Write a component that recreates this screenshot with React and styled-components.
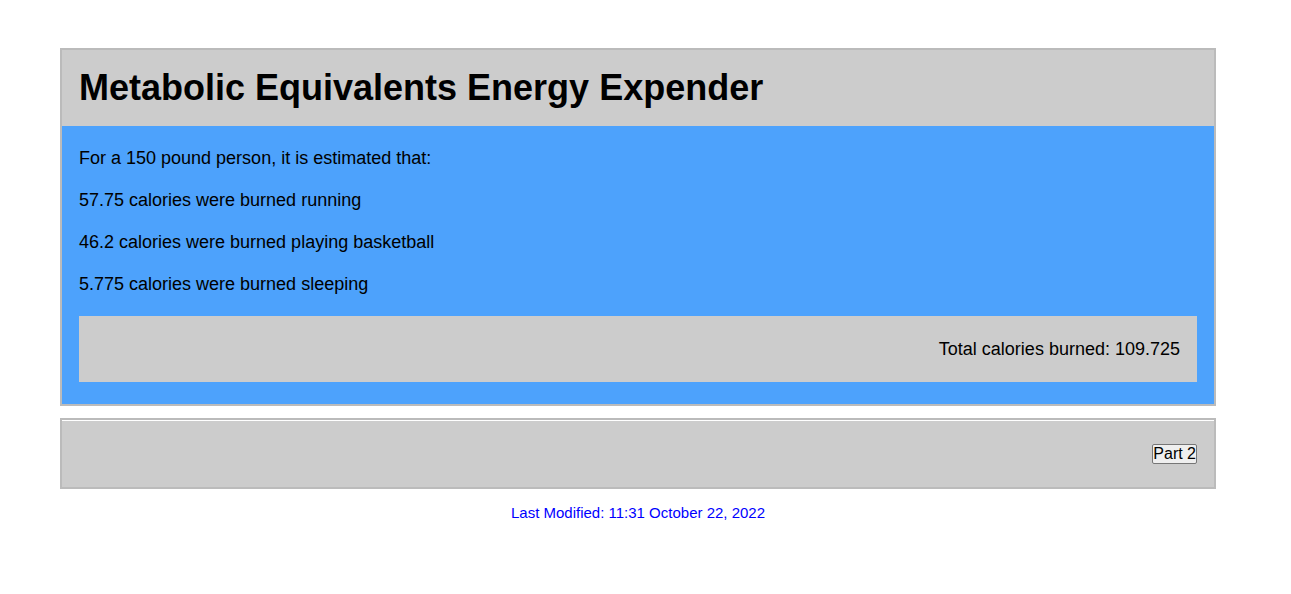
import React from "react";
import styled, { createGlobalStyle } from "styled-components";

const Global = createGlobalStyle`
  html, body { margin: 0; padding: 0; background: #fff; }
  body { font-family: "Liberation Sans", Arial, sans-serif; color: #000; }
`;

const Page = styled.div`
  width: 1260px;
  padding: 48px 8px 0;
  display: flex;
  flex-direction: column;
  align-items: center;
`;

const Panel = styled.section`
  box-sizing: border-box;
  width: 1156px;
  border: 2px solid #bbbbbb;
  background: #cccccc;
`;

const Header = styled.header`
  height: 76px;
  padding: 0 17px;
  display: flex;
  align-items: center;
`;

const Title = styled.h1`
  margin: 0;
  font-size: 36px;
  font-weight: bold;
  line-height: 40px;
  padding-bottom: 1px;
`;

const Body = styled.div`
  background: #4da2fc;
  padding: 20px 17px 22px;
  display: flex;
  flex-direction: column;
  gap: 18px;
`;

const Line = styled.p`
  margin: 0;
  font-size: 18px;
  line-height: 24px;
`;

const Total = styled.div`
  margin-top: 2px;
  background: #cccccc;
  height: 66px;
  padding: 0 17px;
  display: flex;
  align-items: center;
  justify-content: flex-end;
  font-size: 18px;
`;

const Footer = styled.footer`
  box-sizing: border-box;
  width: 1156px;
  margin-top: 12px;
  height: 71px;
  border: 2px solid #bbbbbb;
  background: #cccccc;
  box-shadow: inset 0 1px 0 #ffffff;
  padding: 0 17px;
  display: flex;
  align-items: center;
  justify-content: flex-end;
`;

const Button = styled.button`
  font-family: "Liberation Sans", Arial, sans-serif;
  font-size: 16px;
  line-height: 18px;
  padding: 0;
  white-space: nowrap;
  background: #efefef;
  border: 1px solid #767676;
  border-radius: 2px;
  color: #000;
  margin-top: 1px;
`;

const Modified = styled.p`
  margin: 15px 0 0;
  font-size: 15px;
  line-height: 18px;
  color: #0000ff;
  text-align: center;
`;

export default function App() {
  const lines = [
    "For a 150 pound person, it is estimated that:",
    "57.75 calories were burned running",
    "46.2 calories were burned playing basketball",
    "5.775 calories were burned sleeping",
  ];
  return (
    <>
      <Global />
      <Page>
        <Panel>
          <Header>
            <Title>Metabolic Equivalents Energy Expender</Title>
          </Header>
          <Body>
            {lines.map((l) => (
              <Line key={l}>{l}</Line>
            ))}
            <Total>Total calories burned: 109.725</Total>
          </Body>
        </Panel>
        <Footer>
          <Button>Part 2</Button>
        </Footer>
        <Modified>Last Modified: 11:31 October 22, 2022</Modified>
      </Page>
    </>
  );
}
